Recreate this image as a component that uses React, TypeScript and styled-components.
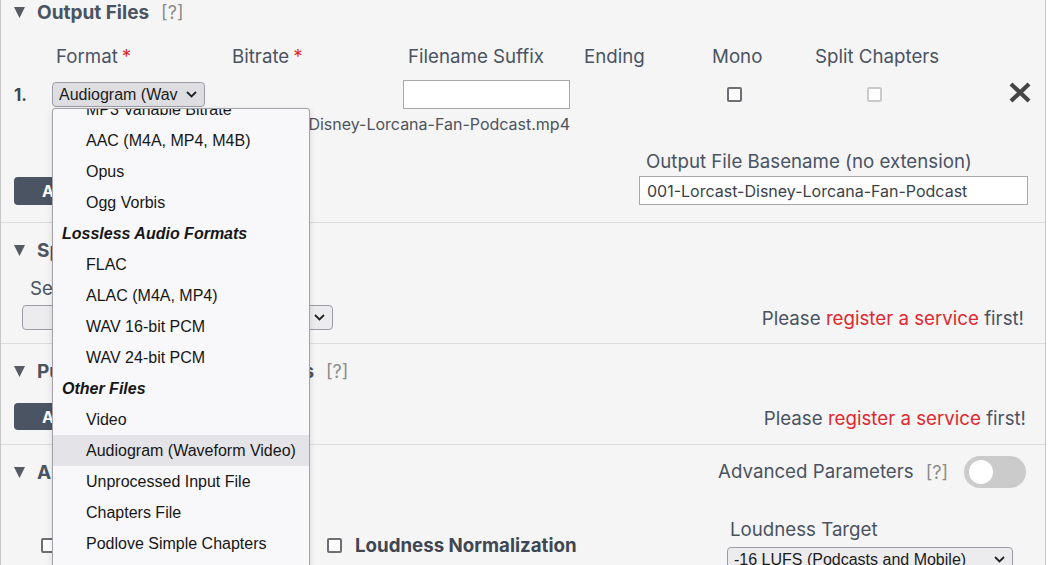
import React from 'react';
import styled, { createGlobalStyle } from 'styled-components';

const TEXT = '#4a5362';
const RED = '#e0282e';

const GlobalStyle = createGlobalStyle`
  html, body {
    margin: 0;
    background: #ffffff;
    font-family: Inter, "Liberation Sans", sans-serif;
    color: ${TEXT};
  }
`;

const Panel = styled.div`
  width: 1044px;
  min-height: 565px;
  background: #f5f5f5;
  border-left: 1px solid #c8c8c8;
  border-right: 1px solid #c8c8c8;
`;

const Section = styled.section<{ $first?: boolean; $pb: number }>`
  padding: ${(p) => (p.$first ? '0' : '15px')} 17px ${(p) => p.$pb}px 13px;
  border-bottom: 1px solid #dcdcdc;
`;

const HeadRow = styled.div`
  display: flex;
  align-items: center;
  justify-content: space-between;
  height: 24px;
`;

const Head = styled.div`
  display: flex;
  align-items: center;
`;

const Caret = styled.svg`
  flex: none;
  width: 11px;
  height: 11px;
  margin-right: 12px;
  fill: #555a63;
`;

const Title = styled.h2`
  margin: 0;
  font-size: 19px;
  font-weight: 700;
  color: ${TEXT};
  white-space: nowrap;
`;

const Help = styled.span`
  margin-left: 12px;
  font-size: 18px;
  color: #8b8b8b;
`;

const Label = styled.span<{ $pad?: number }>`
  font-size: 18.7px;
  line-height: 24px;
  color: ${TEXT};
  padding-left: ${(p) => p.$pad ?? 0}px;
  white-space: nowrap;
`;

const Star = styled.span`
  color: ${RED};
  margin-left: 4px;
`;

const FileGrid = styled.div`
  display: grid;
  grid-template-columns: 38px 176px 175px 176px 128px 103px 140px 1fr auto;
  grid-template-rows: 24px 29px;
  row-gap: 11px;
  align-items: center;
  margin-top: 21px;
`;

const RowNum = styled.span`
  font-size: 17px;
  font-weight: 700;
  color: #3f4652;
`;

const Cell = styled.div`
  position: relative;
  display: flex;
  align-items: center;
`;

const SelectBox = styled.div<{ $w: number; $light?: boolean }>`
  box-sizing: border-box;
  width: ${(p) => p.$w}px;
  height: 25px;
  display: flex;
  align-items: center;
  justify-content: space-between;
  padding: 0 7px 0 6px;
  background: ${(p) => (p.$light ? '#ececee' : '#dedee2')};
  border: 1px solid #9c9ca6;
  border-radius: 4px;
  font-family: "Liberation Sans", Arial, sans-serif;
  font-size: 16px;
  color: #1b1b1b;
  white-space: nowrap;
  overflow: hidden;
`;

const Chevron = () => (
  <svg width="11" height="7" viewBox="0 0 11 7" style={{ flex: 'none' }}>
    <polyline points="1,1 5.5,5.5 10,1" fill="none" stroke="#222" strokeWidth="1.8" />
  </svg>
);

const TextInput = styled.div<{ $w: number }>`
  box-sizing: border-box;
  width: ${(p) => p.$w}px;
  height: 29px;
  padding: 0 7px;
  display: flex;
  align-items: center;
  background: #ffffff;
  border: 1px solid #a9a9a9;
  font-family: Inter, "Liberation Sans", sans-serif;
  font-size: 16px;
  color: #3a3f48;
  white-space: nowrap;
  overflow: hidden;
`;

const Check = styled.span<{ $off?: boolean; $ml?: number }>`
  display: inline-block;
  flex: none;
  box-sizing: border-box;
  width: 15px;
  height: 15px;
  margin-left: ${(p) => p.$ml ?? 0}px;
  border: 2px solid ${(p) => (p.$off ? '#c9c9cc' : '#6e6e78')};
  border-radius: 2px;
  background: #ffffff;
`;

const Close = styled.svg`
  width: 22px;
  height: 21px;
  stroke: #454545;
  stroke-width: 4.2;
  margin: -4px -3px 0 0;
`;

const FileName = styled.div`
  margin-top: 5px;
  padding-left: 52px;
  width: 504px;
  text-align: right;
  font-size: 16px;
  line-height: 20px;
  color: #4d535c;
  white-space: nowrap;
  overflow: hidden;
`;

const BottomRow = styled.div<{ $mt: number }>`
  display: flex;
  align-items: flex-end;
  justify-content: space-between;
  margin-top: ${(p) => p.$mt}px;
`;

const DarkButton = styled.button<{ $h: number }>`
  height: ${(p) => p.$h}px;
  padding: 0 28px;
  border: none;
  border-radius: 4px;
  background: #4b5463;
  color: #ffffff;
  font-family: Inter, "Liberation Sans", sans-serif;
  font-size: 16px;
  font-weight: 700;
`;

const Field = styled.div<{ $gap?: number; $pl?: number }>`
  display: flex;
  flex-direction: column;
  gap: ${(p) => p.$gap ?? 3}px;
  padding-left: ${(p) => p.$pl ?? 0}px;
`;

const Msg = styled.span<{ $mr: number }>`
  font-size: 18.7px;
  line-height: 23px;
  margin-right: ${(p) => p.$mr}px;
  color: ${TEXT};
  white-space: nowrap;
`;

const Link = styled.span`
  color: ${RED};
`;

const Toggle = styled.div`
  box-sizing: border-box;
  width: 62px;
  height: 32px;
  margin: 0 2px 0 16px;
  padding: 4px 5px;
  border-radius: 16px;
  background: #cbcbcb;
  &::before {
    content: '';
    display: block;
    width: 24px;
    height: 24px;
    border-radius: 50%;
    background: #ffffff;
  }
`;

const AlgoGrid = styled.div`
  display: grid;
  grid-template-columns: 313px 400px 1fr;
  align-items: center;
  margin-top: 34px;
`;

const BoldLabel = styled.span`
  font-size: 18.7px;
  font-weight: 700;
  color: #3f4652;
  margin-left: 13px;
  white-space: nowrap;
`;

const Inline = styled.div<{ $pl?: number }>`
  display: flex;
  align-items: center;
  padding-left: ${(p) => p.$pl ?? 0}px;
  height: 30px;
`;

const Popup = styled.div`
  position: absolute;
  left: 0;
  top: 26px;
  z-index: 5;
  width: 258px;
  height: 470px;
  box-sizing: border-box;
  overflow: hidden;
  background: #f8f8fa;
  border: 1px solid #a2a2a8;
  border-radius: 3px;
  box-shadow: 0 2px 6px rgba(0, 0, 0, 0.12);
`;

const OptionList = styled.ul`
  list-style: none;
  margin: -15px 0 0;
  padding: 0;
`;

const Option = styled.li<{ $group?: boolean; $hl?: boolean }>`
  height: 31px;
  line-height: 31px;
  padding-left: ${(p) => (p.$group ? 9 : 33)}px;
  background: ${(p) => (p.$hl ? '#e3e3e8' : 'transparent')};
  font-family: "Liberation Sans", Arial, sans-serif;
  font-size: 16px;
  font-weight: ${(p) => (p.$group ? 700 : 400)};
  font-style: ${(p) => (p.$group ? 'italic' : 'normal')};
  color: #161616;
  white-space: nowrap;
`;

const options: { label: string; group?: boolean; hl?: boolean }[] = [
  { label: 'MP3 Variable Bitrate' },
  { label: 'AAC (M4A, MP4, M4B)' },
  { label: 'Opus' },
  { label: 'Ogg Vorbis' },
  { label: 'Lossless Audio Formats', group: true },
  { label: 'FLAC' },
  { label: 'ALAC (M4A, MP4)' },
  { label: 'WAV 16-bit PCM' },
  { label: 'WAV 24-bit PCM' },
  { label: 'Other Files', group: true },
  { label: 'Video' },
  { label: 'Audiogram (Waveform Video)', hl: true },
  { label: 'Unprocessed Input File' },
  { label: 'Chapters File' },
  { label: 'Podlove Simple Chapters' },
  { label: 'Podlove JSON Chapters' },
];

const SectionHead = ({ title, help, children }: { title: string, help?: boolean, children?: React.ReactNode }) => (
  <HeadRow>
    <Head>
      <Caret viewBox="0 0 11 11"><polygon points="0,0 11,0 5.5,11" /></Caret>
      <Title>{title}</Title>
      {help && <Help>[?]</Help>}
    </Head>
    {children}
  </HeadRow>
);

const Register = ({ mr }: { mr: number }) => (
  <Msg $mr={mr}>Please <Link>register a service</Link> first!</Msg>
);

const App = function () {
  return (
    <>
      <GlobalStyle />
      <Panel>
        <Section $first $pb={17}>
          <SectionHead title="Output Files" help />
          <FileGrid>
            <span />
            <Label $pad={4}>Format<Star>*</Star></Label>
            <Label $pad={4}>Bitrate<Star>*</Star></Label>
            <Label $pad={5}>Filename Suffix</Label>
            <Label $pad={5}>Ending</Label>
            <Label $pad={5}>Mono</Label>
            <Label $pad={5}>Split Chapters</Label>
            <span />
            <span />
            <RowNum>1.</RowNum>
            <Cell>
              <SelectBox $w={153}>Audiogram (Wav<Chevron /></SelectBox>
              <Popup>
                <OptionList>
                  {options.map((o) => (
                    <Option key={o.label} $group={o.group} $hl={o.hl}>{o.label}</Option>
                  ))}
                </OptionList>
              </Popup>
            </Cell>
            <Cell />
            <Cell><TextInput $w={167} /></Cell>
            <Cell />
            <Cell><Check $ml={20} /></Cell>
            <Cell><Check $off $ml={57} /></Cell>
            <span />
            <Cell>
              <Close viewBox="0 0 22 21"><line x1="2" y1="2" x2="20" y2="19" /><line x1="20" y1="2" x2="2" y2="19" /></Close>
            </Cell>
          </FileGrid>
          <FileName>Filename: 001-Lorcast-Disney-Lorcana-Fan-Podcast.mp4</FileName>
          <BottomRow $mt={16}>
            <DarkButton $h={28}>Add Output File</DarkButton>
            <Field $gap={2}>
              <Label $pad={7}>Output File Basename (no extension)</Label>
              <TextInput $w={389}>001-Lorcast-Disney-Lorcana-Fan-Podcast</TextInput>
            </Field>
          </BottomRow>
        </Section>

        <Section $pb={13}>
          <SectionHead title="Speech Recognition" />
          <BottomRow $mt={15}>
            <Field $gap={4} $pl={8}>
              <Label $pad={8}>Select Service</Label>
              <SelectBox $w={311} $light><span /><Chevron /></SelectBox>
            </Field>
            <Register mr={4} />
          </BottomRow>
        </Section>

        <Section $pb={14}>
          <SectionHead title="Publishing / External Services" help />
          <BottomRow $mt={20}>
            <DarkButton $h={27}>Add Outgoing Service</DarkButton>
            <Register mr={2} />
          </BottomRow>
        </Section>

        <Section $pb={12}>
          <SectionHead title="Audio Algorithms">
            <Head>
              <Label>Advanced Parameters</Label>
              <Help>[?]</Help>
              <Toggle />
            </Head>
          </SectionHead>
          <AlgoGrid>
            <Inline $pl={27}><Check /><BoldLabel>Adaptive Leveler</BoldLabel></Inline>
            <Inline><Check /><BoldLabel>Loudness Normalization</BoldLabel></Inline>
            <Field $gap={5}>
              <Label $pad={3}>Loudness Target</Label>
              <SelectBox $w={286} $light>-16 LUFS (Podcasts and Mobile)<Chevron /></SelectBox>
            </Field>
          </AlgoGrid>
        </Section>
      </Panel>
    </>
  );
};

export default App;
